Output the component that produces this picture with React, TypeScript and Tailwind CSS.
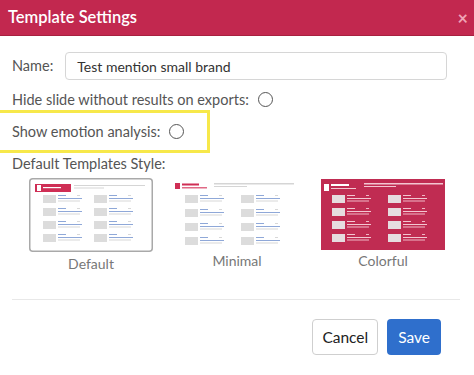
import React from 'react'

type Variant = 'default' | 'minimal' | 'colorful'

function Thumb({ variant }: { variant: Variant }) {
  const colorful = variant === 'colorful'
  const box = colorful ? '#e6dcdf' : '#dcdcdc'
  const blue = colorful ? '#f3c6d1' : '#8fa8d8'
  const line = colorful ? '#f0b8c6' : '#d8d8d8'
  const rows = [0, 1, 2, 3]
  const cols = [0, 1]
  return (
    <svg width="124" height="74" viewBox="0 0 124 74">
      {variant === 'default' && (
        <rect x="0.75" y="0.75" width="122.5" height="72.5" rx="3" fill="#fff" stroke="#a9a9a9" strokeWidth="1.5" />
      )}
      {colorful && <rect x="0" y="1" width="124" height="71" fill="#c02c52" />}
      {variant === 'default' && (
        <g>
          <rect x="6" y="6" width="36" height="8" fill="#cf2e55" />
          <rect x="8" y="7" width="4" height="6" fill="#fff" />
          <rect x="14" y="9" width="18" height="1.2" fill="#fff" />
          <rect x="45" y="7" width="71" height="1" fill="#d5d5d5" />
          <rect x="45" y="9.5" width="30" height="1" fill="#d5d5d5" />
        </g>
      )}
      {variant === 'minimal' && (
        <g>
          <rect x="0" y="5" width="5" height="6" fill="#cf2e55" />
          <rect x="7" y="5.5" width="17" height="2" fill="#cf2e55" />
          <rect x="7" y="9" width="25" height="1.5" fill="#e06a86" />
          <rect x="39" y="5" width="80" height="1.5" fill="#d5d5d5" />
          <rect x="39" y="8" width="33" height="1" fill="#d5d5d5" />
        </g>
      )}
      {colorful && (
        <g>
          <rect x="3" y="6" width="5" height="7" fill="#fff" />
          <rect x="10" y="6" width="18" height="2" fill="#fff" />
          <rect x="10" y="10" width="25" height="1" fill="#f3c6d1" />
          <rect x="43" y="5" width="79" height="1.5" fill="#f3c6d1" />
          <rect x="43" y="8" width="32" height="1" fill="#f3c6d1" />
        </g>
      )}
      {rows.map((r) =>
        cols.map((c) => {
          const ox = variant === 'minimal' ? 10 + c * 56 : variant === 'colorful' ? 11 + c * 56 : 14 + c * 51
          const oy = variant === 'minimal' ? 17 + r * 14 : 17 + r * 13
          return (
            <g key={`${r}-${c}`}>
              <rect x={ox} y={oy} width="13" height="8" fill={box} />
              <rect x={ox + 15} y={oy} width="8" height="1" fill={blue} />
              <rect x={ox + 34} y={oy} width="3" height="1" fill={line} />
              <rect x={ox + 15} y={oy + 3} width="24" height="1" fill={blue} />
              <rect x={ox + 15} y={oy + 5.5} width="22" height="1" fill={line} />
            </g>
          )
        })
      )}
    </svg>
  )
}

function Radio() {
  return <span className="inline-block h-[15px] w-[15px] rounded-full border-[1.5px] border-[#555]" />
}

export default function App() {
  const styles: { v: Variant; label: string }[] = [
    { v: 'default', label: 'Default' },
    { v: 'minimal', label: 'Minimal' },
    { v: 'colorful', label: 'Colorful' },
  ]

  return (
    <div className="relative h-[375px] w-[474px] overflow-hidden bg-white" style={{ fontFamily: '"Lato", "Noto Sans", sans-serif' }}>
      <div className="flex h-[36px] items-center justify-between border-b border-[#a8203f] bg-[#c2284f] pl-[8px] pr-[6px]">
        <h1 className="text-[16.5px] font-semibold text-white">Template Settings</h1>
        <span className="text-[18px] font-bold leading-none text-[#f0a4b6]">×</span>
      </div>

      <div className="px-[12px] pt-[16px]">
        <div className="flex items-center gap-[12px]">
          <span className="text-[14.5px] text-[#555]">Name:</span>
          <div className="flex h-[28px] w-[382px] items-center rounded-[4px] border border-[#d6d6d6] px-[11px] text-[14px] text-[#333]">
            Test mention small brand
          </div>
        </div>

        <div className="mt-[9px] flex items-center gap-[9px] text-[14.5px] text-[#555]">
          <span>Hide slide without results on exports:</span>
          <Radio />
        </div>

        <div className="mt-[10px] flex items-center gap-[9px] text-[14.5px] text-[#555]">
          <span>Show emotion analysis:</span>
          <Radio />
        </div>

        <div className="mt-[10px] text-[14.5px] text-[#555]">Default Templates Style:</div>

        <div className="mt-[4px] grid grid-cols-3 px-[6px]">
          {styles.map((s) => (
            <div key={s.v} className="flex flex-col items-center">
              <Thumb variant={s.v} />
              <span className={`text-[14px] text-[#777] ${s.v === 'default' ? 'mt-[1px]' : 'mt-[-2px]'}`}>{s.label}</span>
            </div>
          ))}
        </div>

        <div className="mt-[25px] h-px w-[448px] bg-[#e8e8e8]" />

        <div className="mt-[19px] flex justify-end gap-[9px] pr-[21px]">
          <button className="h-[36px] rounded-[4px] border border-[#cfcfcf] bg-white px-[9px] text-[15.5px] text-[#222]">Cancel</button>
          <button className="h-[36px] rounded-[4px] bg-[#2f6fcc] px-[11px] text-[15.5px] text-white">Save</button>
        </div>
      </div>

      <div className="pointer-events-none absolute left-[-4px] top-[110px] h-[43px] w-[214px] border-[3px] border-[#f7e84a]" />
    </div>
  )
}
